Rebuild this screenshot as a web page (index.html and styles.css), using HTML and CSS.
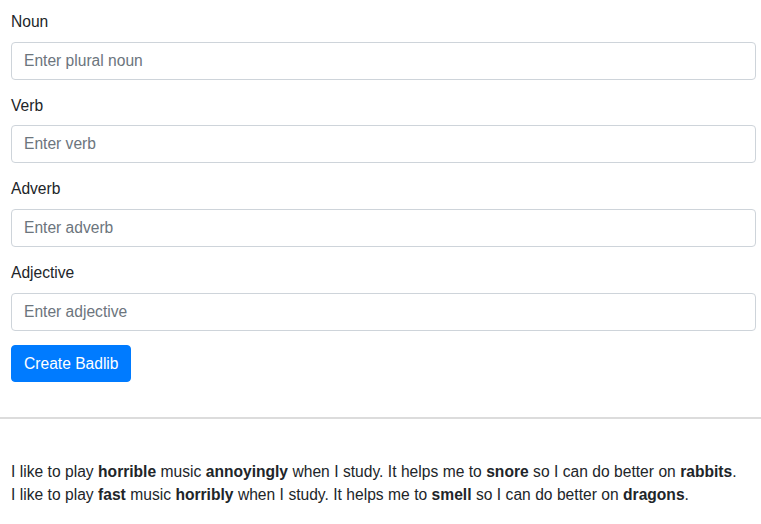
FILE: index.html
```html
<!DOCTYPE html>
<html>
<head>
<meta charset="utf-8">
<link rel="stylesheet" href="styles.css">
</head>
<body>
<form class="form">
  <div class="group">
    <label class="label">Noun</label>
    <input class="input" placeholder="Enter plural noun">
  </div>
  <div class="group">
    <label class="label">Verb</label>
    <input class="input" placeholder="Enter verb">
  </div>
  <div class="group">
    <label class="label">Adverb</label>
    <input class="input" placeholder="Enter adverb">
  </div>
  <div class="group">
    <label class="label">Adjective</label>
    <input class="input" placeholder="Enter adjective">
  </div>
  <button type="button" class="btn">Create Badlib</button>
</form>
<hr class="rule">
<div class="results">
  <div class="line">I like to play <b>horrible</b> music <b>annoyingly</b> when I study. It helps me to <b>snore</b> so I can do better on <b>rabbits</b>.</div>
  <div class="line">I like to play <b>fast</b> music <b>horribly</b> when I study. It helps me to <b>smell</b> so I can do better on <b>dragons</b>.</div>
</div>
</body>
</html>
```
FILE: styles.css
```css
html, body {
  margin: 0;
  padding: 0;
  background: #fff;
}
body {
  font-family: "Liberation Sans", Arial, sans-serif;
  font-size: 15.6px;
  line-height: 1.5;
  color: #212529;
}
.form {
  padding: 12px 5px 0 11px;
}
.group {
  display: flex;
  flex-direction: column;
  margin-bottom: 16px;
}
.label {
  line-height: 20px;
  height: 21.67px;
  margin-bottom: 8px;
}
.input {
  box-sizing: border-box;
  height: 38px;
  width: 100%;
  padding: 6px 12px;
  font-family: inherit;
  font-size: 15.6px;
  color: #495057;
  border: 1px solid #ced4da;
  border-radius: 4px;
  background: #fff;
}
.input::placeholder {
  color: #6c757d;
  opacity: 1;
}
.btn {
  display: block;
  box-sizing: border-box;
  height: 37px;
  margin-top: -2px;
  padding: 6px 12px;
  font-family: inherit;
  font-size: 15.6px;
  line-height: 23px;
  color: #fff;
  background: #007bff;
  border: 1px solid #007bff;
  border-radius: 4px;
}
.rule {
  margin: 35px 0 0;
  border: 0;
  border-top: 2px solid #dcdcdc;
}
.results {
  padding: 41px 11px 0;
}
.line {
  line-height: 23.5px;
  word-spacing: 0.1px;
}
.line b {
  font-weight: 700;
}
```
